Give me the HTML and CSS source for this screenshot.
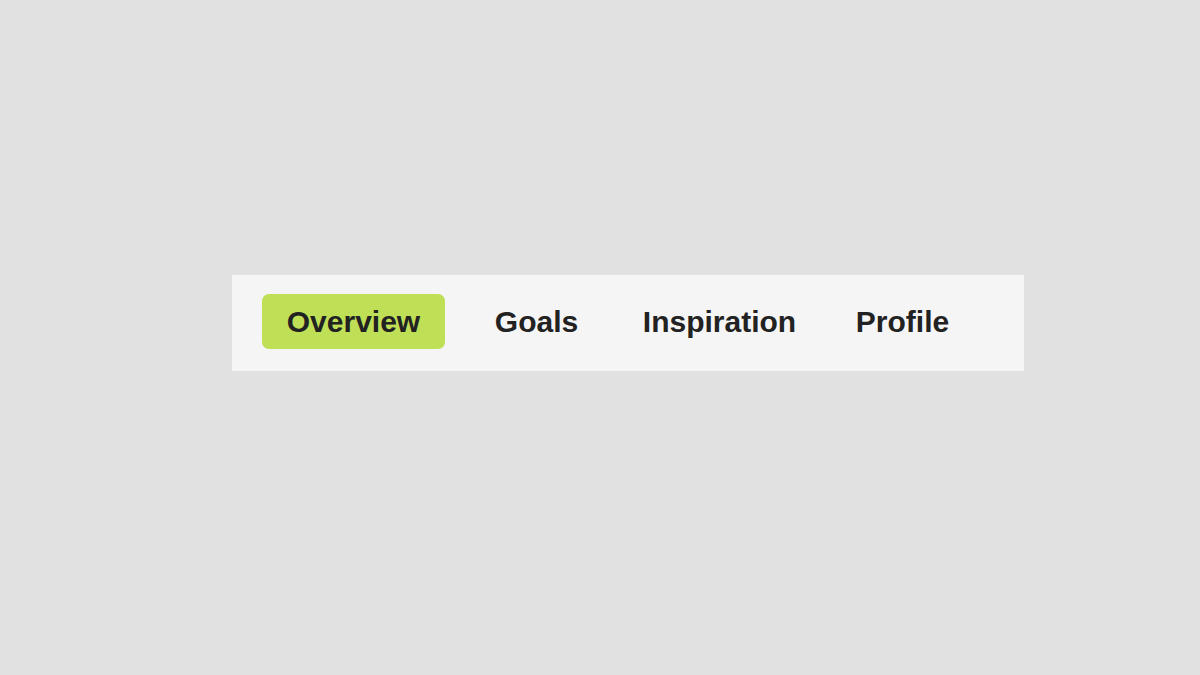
FILE: index.html
```html
<!DOCTYPE html>
<html>
<head>
<meta charset="utf-8">
<link rel="stylesheet" href="styles.css">
</head>
<body>
<nav class="tabs">
  <a class="tab active">Overview</a>
  <a class="tab">Goals</a>
  <a class="tab">Inspiration</a>
  <a class="tab">Profile</a>
</nav>
</body>
</html>
```
FILE: styles.css
```css
html, body {
  margin: 0;
  padding: 0;
  background: #e1e1e1;
  width: 1200px;
  height: 675px;
  overflow: hidden;
}
body {
  display: flex;
  align-items: flex-start;
  padding: 275px 0 0 232px;
  box-sizing: border-box;
}
.tabs {
  display: flex;
  width: 792px;
  height: 96px;
  box-sizing: border-box;
  padding: 19px 30px 0;
  background: #f5f5f5;
  align-items: flex-start;
}
.tab {
  width: 183px;
  height: 55px;
  line-height: 55px;
  text-align: center;
  font-family: "Liberation Sans", Arial, sans-serif;
  font-weight: bold;
  font-size: 30px;
  color: #222222;
  border-radius: 7px;
}
.tab.active {
  background: #bedf56;
}
```
